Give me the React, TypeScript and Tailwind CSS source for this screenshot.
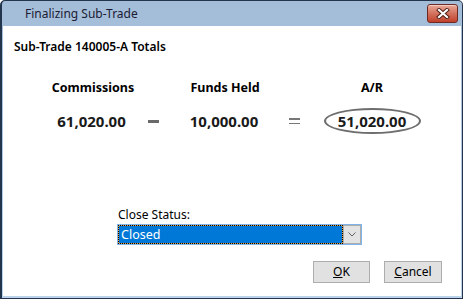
import React from "react";

function CloseButton() {
  return (
    <div className="w-[31px] h-[19px] rounded-[3px] border border-[#6e2a20] bg-gradient-to-b from-[#e9a898] via-[#d2715d] to-[#c0402a] flex items-center justify-center shadow-[inset_0_1px_0_rgba(255,255,255,0.45)]">
      <svg width="14" height="11" viewBox="0 0 14 11">
        <path d="M3 2 L11 9 M11 2 L3 9" stroke="#4a1a14" strokeWidth="4" strokeLinecap="square" />
        <path d="M3 2 L11 9 M11 2 L3 9" stroke="#ffffff" strokeWidth="2.2" strokeLinecap="square" />
      </svg>
    </div>
  );
}

export default function App() {
  return (
    <div className="w-[463px] h-[299px] font-['Noto_Sans',sans-serif]">
      <div className="w-[463px] h-[299px] flex flex-col rounded-t-[5px] border border-l-2 border-[#23344d] bg-gradient-to-b from-[#a3bcd8] to-[#bcd3eb]">
        <div className="h-[25px] shrink-0 flex items-center justify-between pl-[23px] pr-[4px]">
          <span className="text-[12px] leading-[16px] text-[#1b1b33]">Finalizing Sub-Trade</span>
          <CloseButton />
        </div>
        <div className="flex-1 mr-[1px] ml-[1px] mb-[2px] bg-white flex flex-col text-black">
          <div className="pt-[13px] pl-[11px] text-[12px] leading-[16px] font-semibold">
            Sub-Trade 140005-A Totals
          </div>
          <div className="mt-[24px] pl-[37px] grid grid-cols-[106px_15px_128px_11px_144px] text-[12.5px] leading-[18px] font-bold">
            <div className="text-center">Commissions</div>
            <div />
            <div className="text-center">Funds Held</div>
            <div />
            <div className="text-center">A/R</div>
          </div>
          <div className="mt-[11px] pl-[37px] grid grid-cols-[106px_15px_128px_11px_144px] h-[26px] items-center text-[15px] leading-[18px] font-bold text-[#1a1a1a]">
            <div className="text-center pr-[3px]">61,020.00</div>
            <div className="flex justify-center">
              <div className="w-[11px] h-[3px] bg-[#6a6a6a]" />
            </div>
            <div className="text-center pr-[2px]">10,000.00</div>
            <div className="flex flex-col items-center gap-[3px]">
              <div className="w-[11px] h-[1.5px] bg-[#777]" />
              <div className="w-[11px] h-[1.5px] bg-[#777]" />
            </div>
            <div className="flex justify-center">
              <div className="w-[97px] h-[26px] rounded-[50%] border-2 border-[#6e6e6e] flex items-center justify-center">
                51,020.00
              </div>
            </div>
          </div>
          <div className="mt-[73px] pl-[115px] text-[12px] leading-[16px]">Close Status:</div>
          <div className="mt-[1px] ml-[114px] w-[245px] h-[21px] border border-[#7fb4ea] flex bg-white">
            <div className="flex-1 border border-dotted border-black bg-[#e8a040]">
              <div className="w-full h-full bg-[#0078d7] text-white text-[12.5px] leading-[17px] pl-[2px]">Closed</div>
            </div>
            <div className="w-[18px] border border-[#acacac] bg-[#e3e3e3] flex items-center justify-center">
              <svg width="8" height="5" viewBox="0 0 8 5">
                <path d="M0.5 0.5 L4 4 L7.5 0.5" stroke="#606060" strokeWidth="1" fill="none" />
              </svg>
            </div>
          </div>
          <div className="mt-[16px] flex justify-end gap-[14px] pr-[19px] text-[12px]">
            <div className="w-[57px] h-[22px] border border-[#adadad] bg-[#e1e1e1] flex items-center justify-center leading-[16px]">
              <span><span className="underline">O</span>K</span>
            </div>
            <div className="w-[58px] h-[22px] border border-[#adadad] bg-[#e1e1e1] flex items-center justify-center leading-[16px]">
              <span><span className="underline">C</span>ancel</span>
            </div>
          </div>
        </div>
      </div>
    </div>
  );
}
